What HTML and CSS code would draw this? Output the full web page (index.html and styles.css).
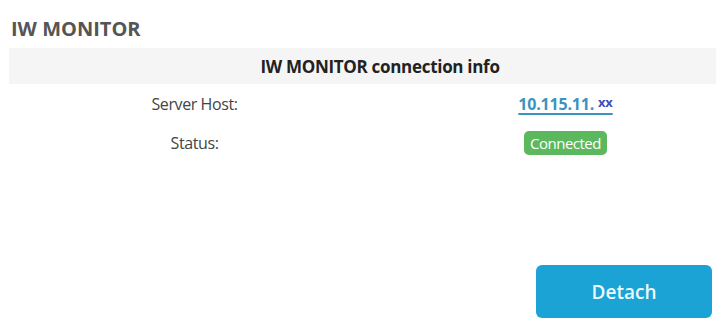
FILE: index.html
```html
<!DOCTYPE html>
<html>
<head>
<meta charset="utf-8">
<link rel="stylesheet" href="styles.css">
</head>
<body>
<div class="page">
  <h1 class="title">IW MONITOR</h1>
  <div class="info">
    <div class="info-head">IW MONITOR connection info</div>
    <div class="info-row">
      <div class="label">Server Host:</div>
      <div class="value"><a class="host" href="#">10.115.11. <span class="mask">xx</span></a></div>
    </div>
    <div class="info-row">
      <div class="label">Status:</div>
      <div class="value"><span class="badge">Connected</span></div>
    </div>
  </div>
  <div class="actions">
    <button class="btn">Detach</button>
  </div>
</div>
</body>
</html>
```
FILE: styles.css
```css
html, body {
  margin: 0;
  padding: 0;
  background: #fff;
  overflow: hidden;
}
.page {
  width: 716px;
  height: 326px;
  overflow: hidden;
  font-family: "Open Sans", "Noto Sans", sans-serif;
  color: #444;
  display: flex;
  flex-direction: column;
}
.title {
  margin: 16px 0 0 11px;
  font-size: 20px;
  font-weight: 700;
  color: #555;
  line-height: 26px;
  letter-spacing: 0;
}
.info {
  margin: 6px 0 0 9px;
  width: 742px;
  flex: none;
}
.info-head {
  background: #f5f5f5;
  height: 36px;
  display: flex;
  align-items: center;
  justify-content: center;
  font-size: 17px;
  font-weight: 700;
  color: #222;
  letter-spacing: -0.3px;
}
.info-row {
  display: grid;
  grid-template-columns: 1fr 1fr;
  height: 39px;
  align-items: center;
}
.label {
  text-align: center;
  font-size: 16px;
  color: #444;
  letter-spacing: -0.4px;
}
.value {
  text-align: center;
}
.host {
  font-size: 16px;
  font-weight: 700;
  color: #3a94bd;
  text-decoration: underline;
  text-decoration-thickness: 2px;
  text-underline-offset: 3px;
  letter-spacing: -0.2px;
}
.mask {
  color: #3d4fb8;
  font-size: 13px;
  vertical-align: 3px;
}
.badge {
  display: inline-block;
  background: #5cb85c;
  color: #fff;
  font-size: 15px;
  line-height: 24px;
  padding: 0 6px;
  border-radius: 5px;
  letter-spacing: -0.5px;
}
.actions {
  margin-top: auto;
  display: flex;
  justify-content: flex-end;
  padding: 0 4px 8px 0;
}
.btn {
  width: 176px;
  height: 53px;
  background: #1aa3d4;
  color: #eef8fc;
  border: none;
  border-radius: 6px;
  font-family: "Open Sans", "Noto Sans", sans-serif;
  font-size: 19px;
  font-weight: 600;
}
```
